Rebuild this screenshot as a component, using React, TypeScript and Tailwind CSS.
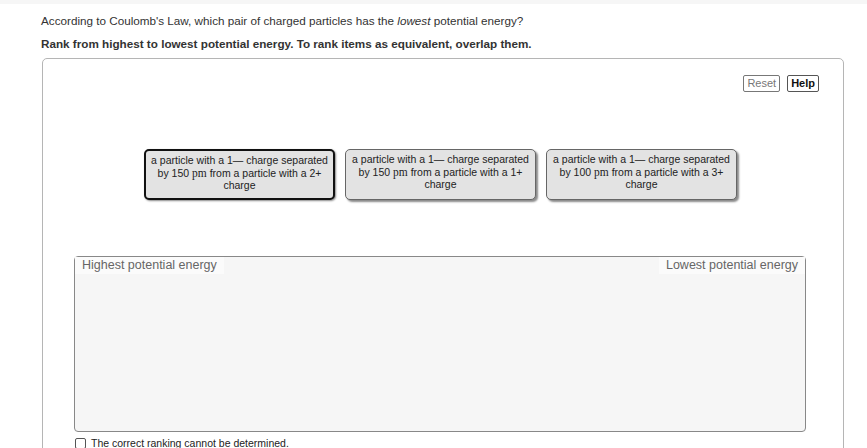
import React from "react";

const Card = ({ dist, charge, selected }: { dist: string; charge: string; selected?: boolean }) => (
  <div
    className={
      "w-[191px] h-[51px] rounded-[5px] bg-[#e3e3e3] text-[10.5px] leading-[12.5px] text-[#222] text-center pt-[3px] " +
      (selected
        ? "border-2 border-[#111] shadow-[1px_1px_2px_#888]"
        : "border border-[#666] shadow-[2px_2px_2px_#8a8a8a]")
    }
  >
    <div>a particle with a 1— charge separated</div>
    <div>
      by {dist} <span className="font-['Liberation_Serif',serif] text-[11.5px]">pm</span> from a particle with a {charge}
    </div>
    <div>charge</div>
  </div>
);

export default function App() {
  return (
    <div className="w-[867px] h-[448px] overflow-hidden bg-white font-['Liberation_Sans',Arial,sans-serif] text-[#333]">
      <div className="h-[4px] bg-[#f6f6f6]" />
      <div className="pl-[41px] pt-[10px] text-[11.7px] leading-[14px] text-[#333]">
        According to Coulomb's Law, which pair of charged particles has the <i>lowest</i> potential energy?
      </div>
      <div className="pl-[41px] pt-[9px] text-[11.7px] leading-[14px] font-bold text-[#333]">
        Rank from highest to lowest potential energy. To rank items as equivalent, overlap them.
      </div>
      <div className="ml-[42px] mt-[7px] w-[802px] h-[420px] border border-[#b5b5b5] rounded-[5px]">
        <div className="flex justify-end gap-[7px] pt-[16px] pr-[24px]">
          <div className="h-[17px] px-[3px] border border-[#777] rounded-[2px] text-[11px] leading-[15px] text-[#777]">Reset</div>
          <div className="h-[17px] px-[3px] border border-[#555] rounded-[2px] text-[11px] leading-[15px] font-bold text-[#111]">Help</div>
        </div>
        <div className="flex gap-[10px] pl-[101px] pt-[57px]">
          <Card dist="150" charge="2+" selected />
          <Card dist="150" charge="1+" />
          <Card dist="100" charge="3+" />
        </div>
        <div className="ml-[31px] mt-[56px] w-[732px] h-[176px] border border-[#888] rounded-[4px] bg-[#f6f6f6]">
          <div className="flex justify-between">
            <div className="bg-[#fbfbfb] pl-[7px] pr-[7px] pt-[1px] text-[12.5px] leading-[15px] text-[#666] h-[17px]">Highest potential energy</div>
            <div className="bg-[#fbfbfb] pl-[7px] pr-[7px] pt-[1px] text-[12.5px] leading-[15px] text-[#666] h-[17px]">Lowest potential energy</div>
          </div>
        </div>
        <div className="flex items-center gap-[5px] ml-[32px] mt-[5px]">
          <div className="w-[11px] h-[11px] border border-[#555] rounded-[2px] bg-white" />
          <span className="text-[10.5px] leading-[13px] text-[#222]">The correct ranking cannot be determined.</span>
        </div>
      </div>
    </div>
  );
}
